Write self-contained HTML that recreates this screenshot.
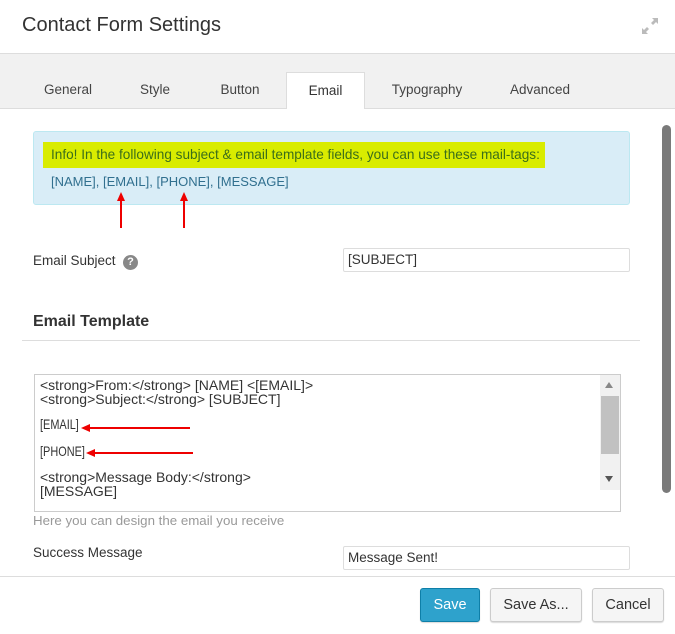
<!DOCTYPE html>
<html><head><style>
*{box-sizing:border-box;margin:0;padding:0}
body{width:675px;height:634px;background:#fff;font-family:"Liberation Sans",sans-serif;font-size:13px;color:#333;position:relative;overflow:hidden}
.a{position:absolute}
.tab{position:absolute;top:72px;height:37px;line-height:36px;font-size:13.5px;color:#444;text-align:center}
input,.inp{position:absolute;border:1px solid #ddd;border-radius:2px;height:24px;padding:3px 4px;font-size:13.5px;color:#333;background:#fff}
.btn{position:absolute;top:588px;height:34px;border:1px solid #ccc;border-radius:3px;background:#f5f5f5;line-height:32px;text-align:center;font-size:14.5px;color:#333;box-shadow:0 1px 1px rgba(0,0,0,.15)}
.red{position:absolute;background:#e00}
.nar{display:inline-block;transform:scaleX(.78);transform-origin:left}
</style></head><body>
<div class="a" style="left:22px;top:14px;font-size:20px;color:#333">Contact Form Settings</div>
<svg class="a" style="left:640px;top:16px" width="20" height="20" viewBox="0 0 20 20" fill="#bbb"><path d="M12 2h6v6l-2-2-3 3-2-2 3-3zM8 18H2v-6l2 2 3-3 2 2-3 3z"/></svg>
<div class="a" style="left:0;top:53px;width:675px;height:56px;background:#f1f1f1;border-top:1px solid #ddd;border-bottom:1px solid #ddd"></div>
<div class="tab" style="left:30px;width:76px">General</div>
<div class="tab" style="left:125px;width:60px">Style</div>
<div class="tab" style="left:205px;width:70px">Button</div>
<div class="tab" style="left:286px;width:79px;background:#fff;border:1px solid #ddd;border-bottom:none;color:#333">Email</div>
<div class="tab" style="left:380px;width:94px">Typography</div>
<div class="tab" style="left:500px;width:80px">Advanced</div>
<div class="a" style="left:33px;top:131px;width:597px;height:74px;background:#d9edf7;border:1px solid #bce8f1;border-radius:3px"></div>
<div class="a" style="left:43px;top:142px;width:502px;height:26px;background:#d9ec00"></div>
<div class="a" style="left:51px;top:147px;font-size:13.6px;color:#3b6e1a">Info! In the following subject &amp; email template fields, you can use these mail-tags:</div>
<div class="a" style="left:51px;top:174px;font-size:13px;color:#31708f">[NAME], [EMAIL], [PHONE], [MESSAGE]</div>
<div class="red" style="left:120px;top:198px;width:1.5px;height:30px"></div>
<svg class="a" style="left:116px;top:192px" width="10" height="10"><path d="M5 0L9 9H1z" fill="#e00"/></svg>
<div class="red" style="left:183px;top:198px;width:1.5px;height:30px"></div>
<svg class="a" style="left:179px;top:192px" width="10" height="10"><path d="M5 0L9 9H1z" fill="#e00"/></svg>
<div class="a" style="left:33px;top:253px;font-size:13.5px">Email Subject</div>
<div class="a" style="left:123px;top:255px;width:15px;height:15px;border-radius:50%;background:#888;color:#fff;font-size:11px;font-weight:bold;text-align:center;line-height:15px">?</div>
<div class="inp" style="left:343px;top:248px;width:287px">[SUBJECT]</div>
<div class="a" style="left:33px;top:313px;font-size:16px;font-weight:bold;color:#333">Email Template</div>
<div class="a" style="left:22px;top:340px;width:618px;height:1px;background:#ddd"></div>
<div class="a" style="left:34px;top:374px;width:587px;height:138px;border:1px solid #ccc;font-size:14px;line-height:13.5px;color:#333;padding:4px 5px">
<div>&lt;strong&gt;From:&lt;/strong&gt; [NAME] &lt;[EMAIL]&gt;</div>
<div>&lt;strong&gt;Subject:&lt;/strong&gt; [SUBJECT]</div>
<div style="margin-top:12px"><span class="nar">[EMAIL]</span></div>
<div style="margin-top:13px"><span class="nar">[PHONE]</span></div>
<div style="margin-top:13px">&lt;strong&gt;Message Body:&lt;/strong&gt;</div>
<div>[MESSAGE]</div>
</div>
<div class="a" style="left:600px;top:375px;width:20px;height:115px;background:#f1f1f1"></div>
<div class="a" style="left:601px;top:396px;width:18px;height:58px;background:#c1c1c1"></div>
<svg class="a" style="left:604px;top:381px" width="10" height="8"><path d="M5 1L9 7H1z" fill="#888"/></svg>
<svg class="a" style="left:604px;top:475px" width="10" height="8"><path d="M5 7L9 1H1z" fill="#555"/></svg>
<div class="red" style="left:90px;top:427px;width:100px;height:1.5px"></div>
<svg class="a" style="left:81px;top:423px" width="10" height="10"><path d="M0 5L9 1V9z" fill="#e00"/></svg>
<div class="red" style="left:95px;top:452px;width:98px;height:1.5px"></div>
<svg class="a" style="left:86px;top:448px" width="10" height="10"><path d="M0 5L9 1V9z" fill="#e00"/></svg>
<div class="a" style="left:33px;top:513px;color:#999;font-size:13.3px">Here you can design the email you receive</div>
<div class="a" style="left:33px;top:545px;font-size:13.5px">Success Message</div>
<div class="inp" style="left:343px;top:546px;width:287px">Message Sent!</div>
<div class="a" style="left:662px;top:125px;width:9px;height:368px;background:#7a7a7a;border-radius:5px"></div>
<div class="a" style="left:0;top:576px;width:675px;height:58px;background:#fff;border-top:1px solid #ddd"></div>
<div class="btn" style="left:420px;width:60px;background:#2ea2cc;border-color:#0e7fa8;color:#fff">Save</div>
<div class="btn" style="left:490px;width:92px">Save As...</div>
<div class="btn" style="left:592px;width:72px">Cancel</div>
</body></html>
